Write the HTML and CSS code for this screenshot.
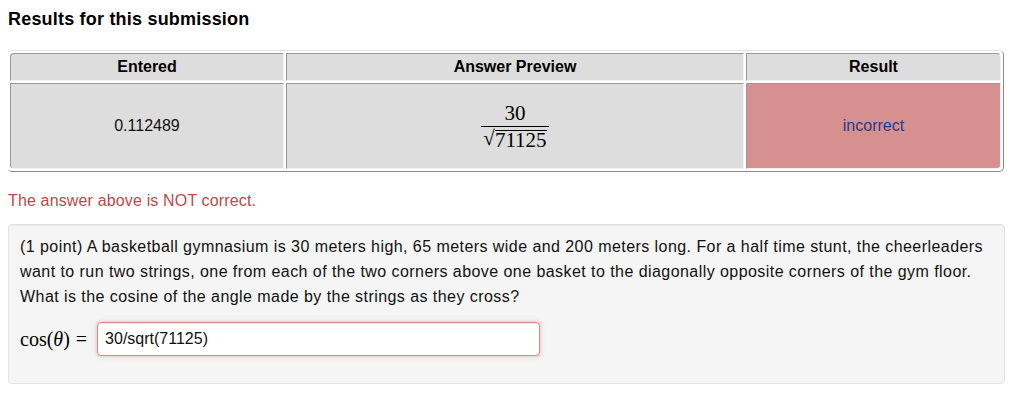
FILE: index.html
```html
<!DOCTYPE html>
<html lang="en">
<head>
    <meta charset="UTF-8">
    <title>Results for this submission</title>
    <link rel="stylesheet" href="styles.css">
</head>
<body>

    <h2 class="results-title">Results for this submission</h2>

    <table class="attempt-results">
        <tr>
            <th class="col-entered">Entered</th>
            <th class="col-preview">Answer Preview</th>
            <th class="col-result">Result</th>
        </tr>
        <tr>
            <td>0.112489</td>
            <td>
                <span class="frac">
                    <span class="num">30</span>
                    <span class="den"><span class="radical">&radic;</span><span class="radicand">71125</span></span>
                </span>
            </td>
            <td class="result-incorrect">incorrect</td>
        </tr>
    </table>

    <p class="attempt-message">The answer above is NOT correct.</p>

    <div class="problem">
        <p class="problem-text">(1 point) A basketball gymnasium is 30 meters high, 65 meters wide and 200 meters long. For a half time stunt, the cheerleaders want to run two strings, one from each of the two corners above one basket to the diagonally opposite corners of the gym floor. What is the cosine of the angle made by the strings as they cross?</p>
        <div class="answer-row">
            <span class="math-label">cos(<i>&theta;</i>)<span class="eq">=</span></span>
            <input type="text" class="answer-input" value="30/sqrt(71125)">
        </div>
    </div>

</body>
</html>
```

FILE: styles.css
```css
body {
    font-family: "Liberation Sans", Arial, sans-serif;
    margin: 8px;
    background-color: white;
    color: #333;
}
.results-title {
    font-size: 18px;
    font-weight: bold;
    letter-spacing: 0.2px;
    color: #000;
    margin: 1px 0 21px 0;
    line-height: 20px;
}
.attempt-results {
    width: 997px;
    border-collapse: separate;
    border-spacing: 2px;
    border: 1px solid;
    border-color: #e0e0e0 #888 #888 #e0e0e0;
    border-radius: 5px;
    margin-left: -1px;
}
.attempt-results th,
.attempt-results td {
    background-color: #dddddd;
    border: 1px solid;
    border-color: #999 #f4f4f4 #f4f4f4 #999;
    text-align: center;
    font-size: 16px;
    color: #111;
}
.attempt-results th {
    height: 26px;
    padding: 0;
    color: #000;
}
.attempt-results td {
    height: 84px;
    padding: 0;
}
.attempt-results tr:first-child th:first-child {
    border-top-left-radius: 4px;
}
.attempt-results tr:first-child th:last-child {
    border-top-right-radius: 4px;
}
.attempt-results tr:last-child td:first-child {
    border-bottom-left-radius: 4px;
}
.attempt-results tr:last-child td:last-child {
    border-bottom-right-radius: 4px;
}
.col-entered {
    width: 272px;
}
.col-preview {
    width: 456px;
}
.result-incorrect {
    background-color: #d69090 !important;
    color: #1c3e8c !important;
}
.frac {
    display: inline-flex;
    flex-direction: column;
    align-items: center;
    font-family: "Liberation Serif", "Times New Roman", serif;
    font-size: 21px;
    color: #000;
    vertical-align: middle;
}
.frac .num {
    padding: 0 2px 2px 2px;
    line-height: 22px;
}
.frac .den {
    border-top: 1px solid #000;
    padding: 0 2px;
    line-height: 22px;
    display: flex;
}
.radicand {
    border-top: 1px solid #000;
    line-height: 19px;
    margin-top: 3px;
}
.attempt-message {
    color: #b94a48;
    font-size: 16px;
    letter-spacing: 0.15px;
    margin: 19px 0 13px 0;
    line-height: 20px;
}
.problem {
    width: 973px;
    background-color: #f5f5f5;
    border: 1px solid #e3e3e3;
    border-radius: 4px;
    padding: 9px 11px 27px 11px;
    box-shadow: inset 0 1px 1px rgba(0, 0, 0, 0.05);
}
.problem-text {
    font-size: 16px;
    letter-spacing: 0.44px;
    line-height: 25px;
    color: #111;
    margin: 0 0 13px 0;
}
.answer-row {
    display: flex;
    align-items: center;
    gap: 10px;
}
.math-label {
    font-family: "Liberation Serif", "Times New Roman", serif;
    font-size: 20px;
    color: #000;
}
.math-label .eq {
    margin-left: 6px;
}
.answer-input {
    width: 443px;
    height: 34px;
    box-sizing: border-box;
    padding: 4px 7px;
    font-family: "Liberation Sans", Arial, sans-serif;
    font-size: 16px;
    color: #111;
    border: 1px solid #d08a89;
    border-radius: 4px;
    box-shadow: inset 0 1px 1px rgba(0, 0, 0, 0.075), 0 0 5px rgba(185, 74, 72, 0.35);
    background-color: white;
}
```
